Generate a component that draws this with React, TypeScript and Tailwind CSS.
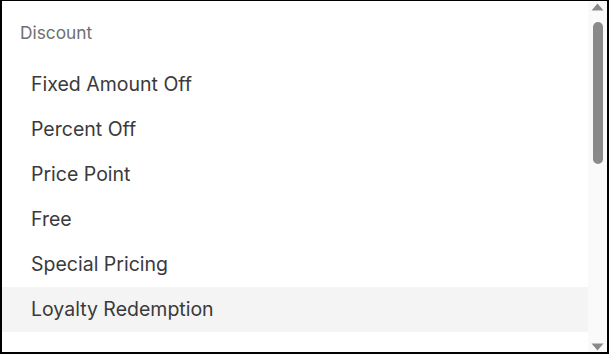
import React from 'react';

const options = ['Fixed Amount Off', 'Percent Off', 'Price Point', 'Free', 'Special Pricing', 'Loyalty Redemption'];

export default function App() {
  const active = 'Loyalty Redemption';

  return (
    <div
      className="w-[609px] h-[354px] border-2 border-t-[1px] border-black bg-white flex overflow-hidden"
      style={{ fontFamily: 'Inter, "Noto Sans", sans-serif' }}
    >
      <div className="flex-1 flex flex-col">
        <div className="pl-[18px] pt-[22px] pb-[19px] text-[17.3px] leading-[20px] text-[#6e6e6e]">Discount</div>
        {options.map((opt) => (
          <div
            key={opt}
            className={`h-[45px] flex items-center pl-[29px] text-[19.5px] text-[#3a3a3a] ${
              opt === active ? 'bg-[#f4f4f4]' : ''
            }`}
          >
            {opt}
          </div>
        ))}
      </div>

      {/* scrollbar */}
      <div className="w-[19px] bg-[#fafafa] flex flex-col items-center">
        <svg width="13" height="8" viewBox="0 0 13 8" className="mt-[2px]">
          <polygon points="6.5,0.5 12.5,7.5 0.5,7.5" fill="#8a8a8a" />
        </svg>
        <div className="mt-[11px] w-[10px] h-[142px] rounded-full bg-[#8a8a8a]" />
        <div className="flex-1" />
        <svg width="13" height="8" viewBox="0 0 13 8" className="mb-[1px]">
          <polygon points="0.5,0.5 12.5,0.5 6.5,7.5" fill="#8a8a8a" />
        </svg>
      </div>
    </div>
  );
}
